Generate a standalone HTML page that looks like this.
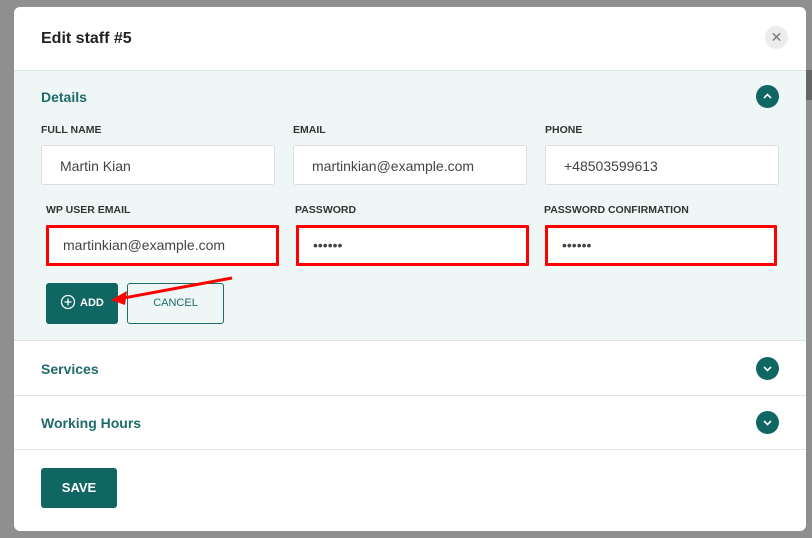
<!DOCTYPE html>
<html><head><style>
*{box-sizing:border-box;margin:0;padding:0}
body{width:812px;height:538px;background:#8e8e8e;font-family:"Liberation Sans",sans-serif;position:relative;overflow:hidden}
.bgl{position:absolute;left:0;top:0;width:812px;height:538px;background:#8f8f8f}
.m{position:absolute;left:14px;top:7px;width:792px;height:524px;background:#fff;border-radius:6px;overflow:hidden}
.a{position:absolute}
.h1{left:27px;top:23px;font-size:16px;font-weight:bold;color:#222}
.x{left:751px;top:19px;width:23px;height:23px;border-radius:50%;background:#ececec;color:#777;font-size:14px;text-align:center;line-height:23px}
.det{left:0;top:63px;width:792px;height:271px;background:#eef7f6;border-top:1px solid #dde3e3;border-bottom:1px solid #dde3e3}
.st{font-size:14px;font-weight:bold;color:#1e6b6a}
.c{width:23px;height:23px;border-radius:50%;background:#0f6663}
.lb{font-size:10.5px;font-weight:bold;color:#333}
.in{width:234px;height:40px;background:#fff;border:1px solid #dcdcdc;border-radius:3px;font-size:14px;color:#444;padding:12px 0 0 18px}
.r{border:3px solid #f00;border-radius:1px;background:#fff;font-size:14px;color:#444;padding:9px 0 0 14px;height:41px}
.ln{left:0;width:792px;height:1px;background:#e2e6e6}
.btn{background:#0f6663;color:#fff;font-weight:bold;border-radius:3px}
</style></head><body>
<div class="bgl"></div>
<div class="a" style="left:806px;top:70px;width:6px;height:30px;background:#666"></div>
<div class="m">
<div class="a h1">Edit staff #5</div>
<div class="a x">✕</div>
<div class="a det"></div>
<div class="a st" style="left:27px;top:82px">Details</div>
<div class="a c" style="left:742px;top:78px"><svg width="23" height="23"><path d="M8 13l3.5-3.5L15 13" stroke="#fff" stroke-width="1.6" fill="none"/></svg></div>
<div class="a lb" style="left:27px;top:117px">FULL NAME</div>
<div class="a lb" style="left:279px;top:117px">EMAIL</div>
<div class="a lb" style="left:531px;top:117px">PHONE</div>
<div class="a in" style="left:27px;top:138px">Martin Kian</div>
<div class="a in" style="left:279px;top:138px">martinkian@example.com</div>
<div class="a in" style="left:531px;top:138px">+48503599613</div>
<div class="a lb" style="left:32px;top:197px">WP USER EMAIL</div>
<div class="a lb" style="left:281px;top:197px">PASSWORD</div>
<div class="a lb" style="left:530px;top:197px">PASSWORD CONFIRMATION</div>
<div class="a r" style="left:32px;top:218px;width:233px">martinkian@example.com</div>
<div class="a r" style="left:282px;top:218px;width:233px">••••••</div>
<div class="a r" style="left:531px;top:218px;width:232px">••••••</div>
<div class="a btn" style="left:32px;top:276px;width:72px;height:41px;font-size:11px;line-height:41px;padding-left:14px"><svg width="16" height="16" style="vertical-align:-4px;margin-right:4px"><circle cx="8" cy="8" r="6.5" stroke="#fff" stroke-width="1.3" fill="none"/><path d="M8 4.5v7M4.5 8h7" stroke="#fff" stroke-width="1.3"/></svg>ADD</div>
<div class="a" style="left:113px;top:276px;width:97px;height:41px;border:1px solid #1e6b6a;border-radius:3px;color:#1e6b6a;font-size:11px;text-align:center;line-height:39px">CANCEL</div>
<svg class="a" style="left:0;top:0" width="792" height="340"><path d="M218 271L104 292" stroke="#f00" stroke-width="3"/><path d="M97 293l16-9-2 14z" fill="#f00"/></svg>
<div class="a st" style="left:27px;top:354px">Services</div>
<div class="a c" style="left:742px;top:350px"><svg width="23" height="23"><path d="M8 10l3.5 3.5L15 10" stroke="#fff" stroke-width="1.6" fill="none"/></svg></div>
<div class="a ln" style="top:388px"></div>
<div class="a st" style="left:27px;top:408px">Working Hours</div>
<div class="a c" style="left:742px;top:404px"><svg width="23" height="23"><path d="M8 10l3.5 3.5L15 10" stroke="#fff" stroke-width="1.6" fill="none"/></svg></div>
<div class="a ln" style="top:442px"></div>
<div class="a btn" style="left:27px;top:461px;width:76px;height:40px;font-size:13px;text-align:center;line-height:40px">SAVE</div>
</div>
</body></html>
